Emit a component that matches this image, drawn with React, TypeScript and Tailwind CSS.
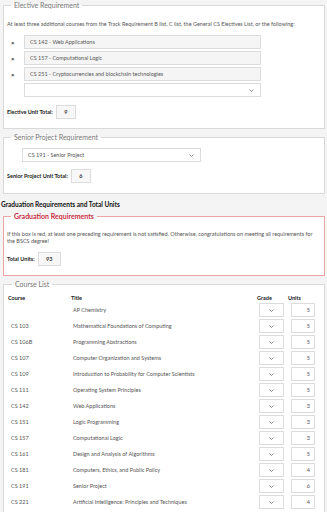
import React from "react";

const courses = [
  { code: "", title: "AP Chemistry", units: 5 },
  { code: "CS 103", title: "Mathematical Foundations of Computing", units: 5 },
  { code: "CS 106B", title: "Programming Abstractions", units: 5 },
  { code: "CS 107", title: "Computer Organization and Systems", units: 5 },
  { code: "CS 109", title: "Introduction to Probability for Computer Scientists", units: 5 },
  { code: "CS 111", title: "Operating System Principles", units: 5 },
  { code: "CS 142", title: "Web Applications", units: 3 },
  { code: "CS 151", title: "Logic Programming", units: 3 },
  { code: "CS 157", title: "Computational Logic", units: 3 },
  { code: "CS 161", title: "Design and Analysis of Algorithms", units: 5 },
  { code: "CS 181", title: "Computers, Ethics, and Public Policy", units: 4 },
  { code: "CS 191", title: "Senior Project", units: 6 },
  { code: "CS 221", title: "Artificial Intelligence: Principles and Techniques", units: 4 },
];

const electives = [
  "CS 142 - Web Applications",
  "CS 157 - Computational Logic",
  "CS 251 - Cryptocurrencies and blockchain technologies",
];

function Chevron() {
  return (
    <svg width="5" height="3" viewBox="0 0 5 3" className="shrink-0">
      <path d="M0.5 0.5 L2.5 2.5 L4.5 0.5" fill="none" stroke="#777" strokeWidth="0.8" />
    </svg>
  );
}

function TotalBox({ value, width }: { value: string | number; width: string }) {
  return (
    <div
      className={`${width} h-[14px] flex items-center justify-center bg-[#f7f7f7] border border-[#dcdcdc] text-[5.5px] text-[#333] font-bold`}
    >
      {value}
    </div>
  );
}

export default function App() {
  return (
    <div
      className="min-h-screen bg-[#f4f4f4] pl-[3px] pr-[2px] pt-[1px] text-[#555]"
      style={{ fontFamily: "Lato, 'Liberation Sans', sans-serif" }}
    >
      <fieldset className="border border-[#d9d9d9] bg-white px-[3px] pb-[9px]">
        <legend className="ml-[4px] px-[3px] text-[7px] leading-[8px] text-[#777]">
          Elective Requirement
        </legend>
        <p className="mt-[11px] text-[5.5px] leading-[8px]">
          At least three additional courses from the Track Requirement B list, C list, the General CS
          Electives List, or the following:
        </p>
        <div className="mt-[7px] flex flex-col gap-[2px]">
          {electives.map((e) => (
            <div key={e} className="flex items-center">
              <span className="w-[17px] pl-[4px] text-[6px] font-bold text-[#333]">×</span>
              <div className="w-[237px] h-[14px] flex items-center pl-[5px] bg-[#f5f5f5] border border-[#dcdcdc] text-[5.5px]">
                {e}
              </div>
            </div>
          ))}
          <div className="flex items-center">
            <span className="w-[17px]" />
            <div className="w-[237px] h-[14px] flex items-center justify-end pr-[6px] bg-white border border-[#dcdcdc]">
              <Chevron />
            </div>
          </div>
        </div>
        <div className="mt-[8px] flex items-center gap-[3px]">
          <span className="text-[5.5px] font-bold text-[#222]">Elective Unit Total:</span>
          <TotalBox value={9} width="w-[20px]" />
        </div>
      </fieldset>

      <fieldset className="mt-[4px] border border-[#d9d9d9] bg-white px-[3px] pb-[10px]">
        <legend className="ml-[4px] px-[3px] text-[7px] leading-[8px] text-[#777]">
          Senior Project Requirement
        </legend>
        <div className="mt-[7px] ml-[15px] w-[179px] h-[14px] flex items-center justify-between pl-[5px] pr-[6px] bg-white border border-[#dcdcdc] text-[5.5px]">
          <span>CS 191 - Senior Project</span>
          <Chevron />
        </div>
        <div className="mt-[7px] flex items-center gap-[3px]">
          <span className="text-[5.5px] font-bold text-[#222]">Senior Project Unit Total:</span>
          <TotalBox value={6} width="w-[20px]" />
        </div>
      </fieldset>

      <h2 className="mt-[7px] -ml-[2px] text-[6.5px] leading-[8px] font-bold text-[#111]">
        Graduation Requirements and Total Units
      </h2>

      <fieldset className="mt-[3px] border border-[#eba3a3] bg-white px-[3px] pb-[9px]">
        <legend className="ml-[4px] px-[3px] text-[7px] leading-[8px] font-bold text-[#c8283c]">
          Graduation Requirements
        </legend>
        <p className="mt-[11px] text-[5.5px] leading-[7px] pr-[4px]">
          If this box is red, at least one preceding requirement is not satisfied. Otherwise,
          congratulations on meeting all requirements for the BSCS degree!
        </p>
        <div className="mt-[7px] flex items-center gap-[3px]">
          <span className="text-[5.5px] font-bold text-[#222]">Total Units:</span>
          <TotalBox value={93} width="w-[23px]" />
        </div>
      </fieldset>

      <fieldset className="mt-[4px] border border-[#d9d9d9] bg-white pl-[4px] pr-[3px] pb-[10px]">
        <legend className="ml-[4px] px-[3px] text-[7px] leading-[8px] text-[#777]">
          Course List
        </legend>
        <div className="mt-[6px] grid grid-cols-[63px_186px_31px_30px] h-[8px] items-center text-[5.5px] font-bold text-[#222]">
          <span>Course</span>
          <span>Title</span>
          <span>Grade</span>
          <span>Units</span>
        </div>
        <div className="mt-[1px] flex flex-col gap-[2px]">
          {courses.map((c) => (
            <div
              key={c.title}
              className="grid grid-cols-[63px_186px_31px_30px] h-[14px] items-center text-[5.5px]"
            >
              <span className="pl-[3px]">{c.code}</span>
              <span className="pl-[2px]">{c.title}</span>
              <div className="ml-[2px] w-[25px] h-[14px] flex items-center justify-center bg-white border border-[#dcdcdc]">
                <Chevron />
              </div>
              <div className="ml-[3px] w-[24px] h-[14px] flex items-center justify-end pr-[4px] bg-white border border-[#dcdcdc]">
                {c.units}
              </div>
            </div>
          ))}
        </div>
      </fieldset>
    </div>
  );
}
